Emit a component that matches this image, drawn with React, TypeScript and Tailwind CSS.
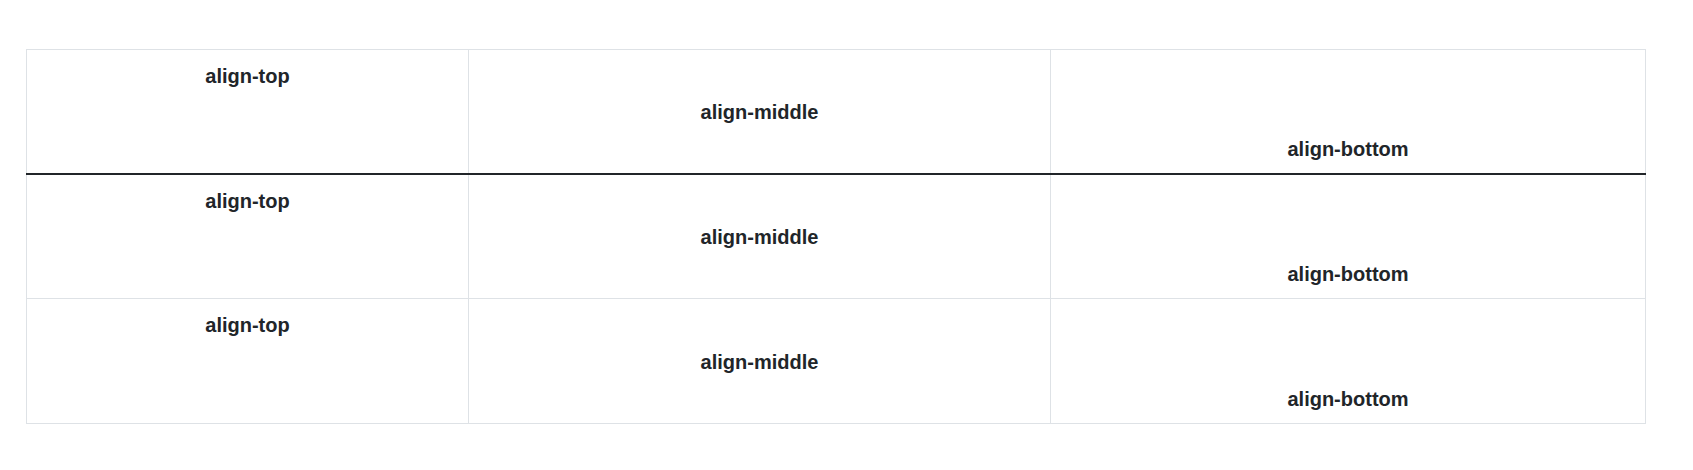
const rows = [0, 1, 2];

export default function App() {
  return (
    <div className="min-h-screen bg-white pt-[49px] pl-[26px] font-['Liberation_Sans',Arial,sans-serif] text-[#212529]">
      <table className="w-[1619px] table-fixed border-collapse border border-[#dee2e6]">
        <colgroup>
          <col className="w-[442px]" />
          <col className="w-[582px]" />
          <col className="w-[595px]" />
        </colgroup>
        <tbody>
          {rows.map((r) => (
            <tr
              key={r}
              className={
                r === 0
                  ? "h-[124px] border-b-2 border-b-[#212529]"
                  : "h-[125px] border-b border-b-[#dee2e6]"
              }
            >
              <td className="border-x border-[#dee2e6] px-3 pt-[11px] pb-[9px] text-center align-top text-[20px] font-bold leading-[1.5]">
                align-top
              </td>
              <td className="border-x border-[#dee2e6] px-3 pt-[11px] pb-[9px] text-center align-middle text-[20px] font-bold leading-[1.5]">
                align-middle
              </td>
              <td className="border-x border-[#dee2e6] px-3 pt-[11px] pb-[9px] text-center align-bottom text-[20px] font-bold leading-[1.5]">
                align-bottom
              </td>
            </tr>
          ))}
        </tbody>
      </table>
    </div>
  );
}
